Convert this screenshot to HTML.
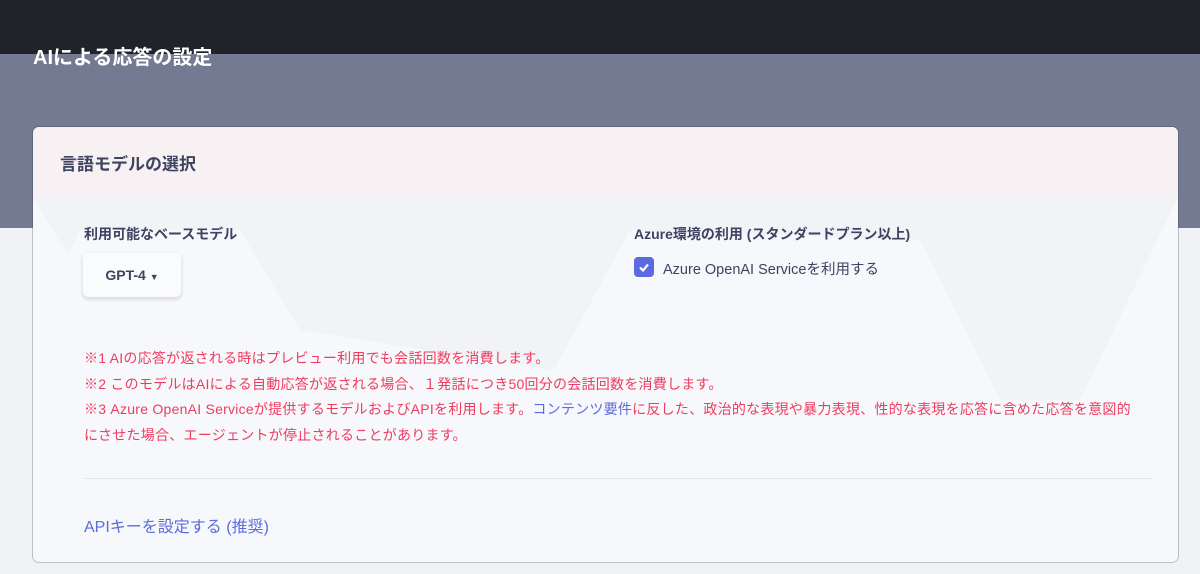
<!DOCTYPE html>
<html><head><meta charset="utf-8"><style>
*{box-sizing:border-box;margin:0;padding:0}
body{width:1200px;height:574px;overflow:hidden;background:#f1f2f6;font-family:"Liberation Sans","Noto Sans CJK JP",sans-serif;position:relative}
.top{position:absolute;left:0;top:0;width:1200px;height:54px;background:#202329}
.band{position:absolute;left:0;top:54px;width:1200px;height:174px;background:#737a91}
.title{position:absolute;left:33px;top:41px;color:#fff;font-size:20px;font-weight:bold}
.card{position:absolute;left:33px;top:127px;width:1145px;height:435px;border-radius:6px;background:#f7f8fb;overflow:hidden;box-shadow:0 0 0 1px rgba(40,44,60,.25)}
.head{position:absolute;left:0;top:0;width:100%;height:68px;background:#f8f1f4}
.head span{position:absolute;left:27px;top:23px;font-size:17px;font-weight:bold;color:#3d4360}
svg{position:absolute;left:0;top:68px}
.lbl{position:absolute;font-size:14px;font-weight:bold;color:#3d4360}
.btn{position:absolute;left:50px;top:126px;width:98px;height:44px;background:#fafbfd;border-radius:5px;box-shadow:0 2px 4px rgba(0,0,0,.15);font-size:14px;font-weight:bold;color:#3d4360;text-align:center;line-height:44px}
.cb{position:absolute;left:601px;top:130px;width:20px;height:20px;border-radius:4px;background:#5b6adf}
.cbt{position:absolute;left:630px;top:131px;font-size:14.5px;color:#3d4360}
.notes{position:absolute;left:51px;top:219px;font-size:14px;letter-spacing:0.25px;line-height:25.5px;color:#ee3c5f;width:1090px}
.notes a{color:#5b6cdc;text-decoration:none}
.hr{position:absolute;left:51px;top:351px;width:1069px;height:1px;background:#e3e5ec}
.link{position:absolute;left:51px;top:386px;font-size:16px;color:#5b6cdc}
</style></head><body>
<div class="top"></div><div class="band"></div>
<div class="title">AIによる応答の設定</div>
<div class="card">
<div class="head"><span>言語モデルの選択</span></div>
<svg width="1145" height="367"><polygon fill="#f2f3f7" points="0,0 1145,0 1145,2 1047,205 967,205 887,45 597,35 521,175 267,135 207,35 47,35 35,60 2,5 0,5"/></svg>
<div class="lbl" style="left:51px;top:97px">利用可能なベースモデル</div>
<div class="btn">GPT-4 <span style="font-size:9px">▼</span></div>
<div class="lbl" style="left:601px;top:97px">Azure環境の利用 (スタンダードプラン以上)</div>
<div class="cb"><svg width="20" height="20" style="left:0;top:0"><path d="M6 10.5l3 3 5-6" stroke="#fff" stroke-width="2.2" fill="none"/></svg></div>
<div class="cbt">Azure OpenAI Serviceを利用する</div>
<div class="notes">※1 AIの応答が返される時はプレビュー利用でも会話回数を消費します。<br>※2 このモデルはAIによる自動応答が返される場合、１発話につき50回分の会話回数を消費します。<br>※3 Azure OpenAI Serviceが提供するモデルおよびAPIを利用します。<a>コンテンツ要件</a>に反した、政治的な表現や暴力表現、性的な表現を応答に含めた応答を意図的<br>にさせた場合、エージェントが停止されることがあります。</div>
<div class="hr"></div>
<div class="link">APIキーを設定する (推奨)</div>
</div>
</body></html>
